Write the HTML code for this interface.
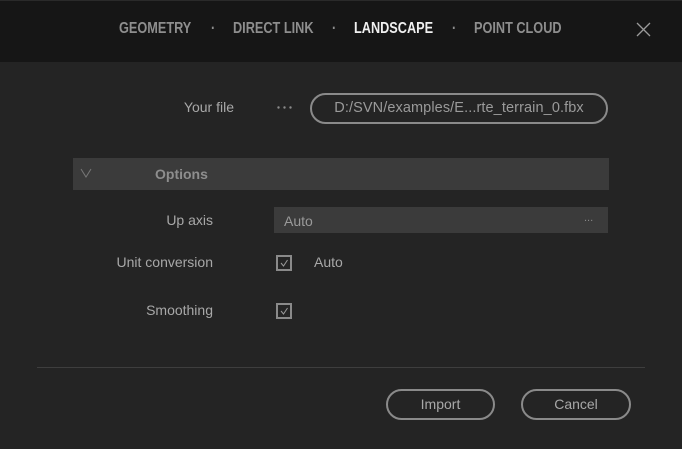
<!DOCTYPE html>
<html><head><style>
body{margin:0;width:682px;height:449px;background:#242424;font-family:"Liberation Sans",sans-serif;position:relative;overflow:hidden;color:#a8a8a8}
.a{position:absolute;white-space:nowrap}
.hdr{position:absolute;left:0;top:0;width:682px;height:61px;background:#161616;border-top:1px solid #2a2a2a}
.nav{font-family:"Liberation Sans",sans-serif;font-weight:bold;font-size:15.5px;top:20px;color:#8e8e8e;transform:scaleX(0.82);transform-origin:left top}
.lbl{font-size:14px;text-align:right;color:#a8a8a8}
.cb{position:absolute;width:12px;height:12px;border:2px solid #8a8a8a}
.btn{position:absolute;border:2px solid #8a8a8a;border-radius:16px;font-size:14px;text-align:center;color:#a8a8a8;box-sizing:border-box}
</style></head><body>
<div class="hdr"></div>
<div class="a nav" style="left:119px">GEOMETRY</div>
<div class="a nav" style="left:211px">·</div>
<div class="a nav" style="left:233px">DIRECT LINK</div>
<div class="a nav" style="left:332px">·</div>
<div class="a nav" style="left:354px;color:#f0f0f0">LANDSCAPE</div>
<div class="a nav" style="left:452px">·</div>
<div class="a nav" style="left:474px">POINT CLOUD</div>
<svg class="a" style="left:636px;top:22px" width="15" height="15"><path d="M1 1L14 14M14 1L1 14" stroke="#9a9a9a" stroke-width="1.3"/></svg>
<div class="a lbl" style="left:150px;width:84px;top:99px">Your file</div>
<svg class="a" style="left:277px;top:106px" width="16" height="3"><circle cx="1.5" cy="1.5" r="1.2" fill="#8a8a8a"/><circle cx="7.5" cy="1.5" r="1.2" fill="#8a8a8a"/><circle cx="13.5" cy="1.5" r="1.2" fill="#8a8a8a"/></svg>
<div class="btn" style="left:310px;top:93px;width:298px;height:31px;line-height:27px;color:#9a9a9a;font-size:14.5px;letter-spacing:0.1px">D:/SVN/examples/E...rte_terrain_0.fbx</div>
<div class="a" style="left:73px;top:158px;width:536px;height:32px;background:#3b3b3b"></div>
<svg class="a" style="left:80px;top:168px" width="12" height="10"><path d="M1 1L6 9L11 1" stroke="#777" fill="none"/></svg>
<div class="a" style="left:155px;top:166px;font-size:14px;font-weight:bold;color:#8e8e8e">Options</div>
<div class="a lbl" style="left:100px;width:113px;top:212px">Up axis</div>
<div class="a" style="left:274px;top:207px;width:334px;height:26px;background:#3b3b3b"></div>
<div class="a" style="left:284px;top:213px;font-size:14px;color:#9a9a9a">Auto</div>
<div class="a" style="left:584px;top:212px;font-size:11px;color:#888">...</div>
<div class="a lbl" style="left:60px;width:153px;top:254px">Unit conversion</div>
<div class="cb" style="left:276px;top:255px"></div>
<svg class="a" style="left:278px;top:257px" width="12" height="12"><path d="M3 6L5.5 9L9.5 3" stroke="#999" fill="none"/></svg>
<div class="a" style="left:314px;top:254px;font-size:14px;color:#a8a8a8">Auto</div>
<div class="a lbl" style="left:60px;width:153px;top:302px">Smoothing</div>
<div class="cb" style="left:276px;top:303px"></div>
<svg class="a" style="left:278px;top:305px" width="12" height="12"><path d="M3 6L5.5 9L9.5 3" stroke="#999" fill="none"/></svg>
<div class="a" style="left:37px;top:367px;width:608px;height:1px;background:#3e3e3e"></div>
<div class="btn" style="left:386px;top:389px;width:109px;height:31px;line-height:27px">Import</div>
<div class="btn" style="left:521px;top:389px;width:110px;height:31px;line-height:27px">Cancel</div>
</body></html>
